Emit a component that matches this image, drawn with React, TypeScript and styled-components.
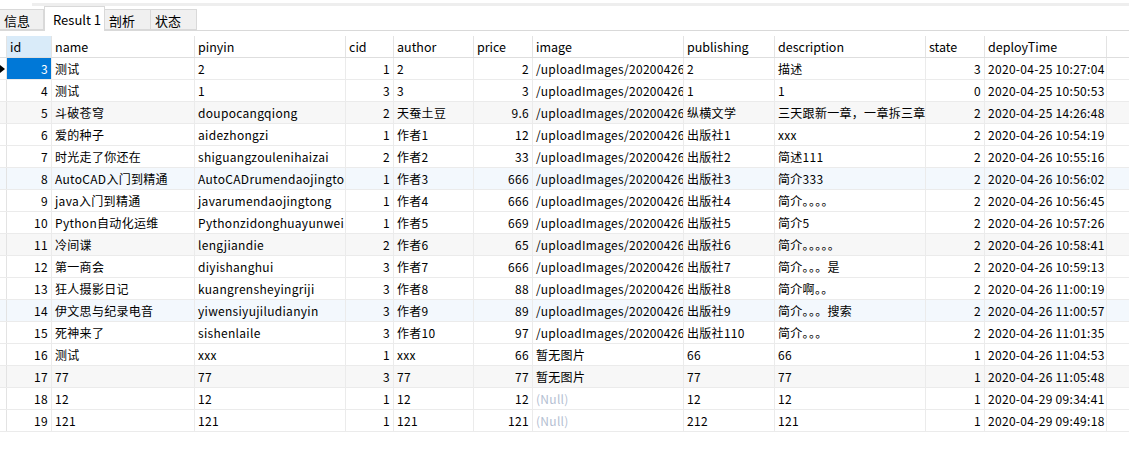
import React from "react";
import styled, { createGlobalStyle } from "styled-components";

const GlobalStyle = createGlobalStyle`
  html, body { margin: 0; padding: 0; background: #ffffff; }
  body {
    font-family: "Noto Sans CJK SC", "Noto Sans", sans-serif;
    font-size: 12px;
    color: #000000;
  }
`;

const Page = styled.div`
  width: 1129px;
  height: 452px;
  overflow: hidden;
  background: #ffffff;
`;

const TopStrip = styled.div`
  display: flex;
  height: 6px;
  padding-top: 3px;
  box-sizing: border-box;
`;

const StripGap = styled.div`
  width: 32px;
`;

const StripBand = styled.div`
  flex: 1;
  background: #eeeeee;
`;

const TabBar = styled.div`
  display: flex;
  align-items: flex-end;
  height: 25px;
  border-bottom: 1px solid #d9d9d9;
  box-sizing: border-box;
`;

const Tab = styled.div<{ $active?: boolean; $w: number }>`
  width: ${(p) => p.$w}px;
  height: ${(p) => (p.$active ? 25 : 21)}px;
  box-sizing: border-box;
  display: flex;
  align-items: center;
  padding-left: ${(p) => (p.$active ? 8 : 4)}px;
  padding-top: ${(p) => (p.$active ? 0 : 1)}px;
  margin-bottom: ${(p) => (p.$active ? -1 : 0)}px;
  background: ${(p) => (p.$active ? "#ffffff" : "#f0f0f0")};
  border: 1px solid #d9d9d9;
  border-left: ${(p) => (p.$active ? "1px solid #d9d9d9" : "none")};
  border-bottom: ${(p) => (p.$active ? "none" : "1px solid #d9d9d9")};
  font-size: 13px;
  color: #000;
  &:first-child { border-left: none; }
`;

const Spacer = styled.div`
  height: 5px;
`;

const Grid = styled.div`
  display: flex;
  flex-direction: column;
`;

const Row = styled.div<{ $tint?: string; $header?: boolean }>`
  display: flex;
  height: 21px;
  border-bottom: 1px solid ${(p) => (p.$header ? "#dedede" : "#ebebeb")};
  box-sizing: content-box;
  background: ${(p) => p.$tint || "#ffffff"};
`;

const Indicator = styled.div`
  width: 7px;
  flex: none;
  border-right: 1px solid #e3e3e3;
  box-sizing: border-box;
  display: flex;
  align-items: center;
`;

const Arrow = styled.div`
  width: 0;
  height: 0;
  border-top: 4px solid transparent;
  border-bottom: 4px solid transparent;
  border-left: 5px solid #000;
`;

const Cell = styled.div<{ $w: number; $right?: boolean; $sel?: boolean; $head?: boolean; $headSel?: boolean }>`
  width: ${(p) => p.$w}px;
  flex: none;
  box-sizing: border-box;
  border-right: 1px solid ${(p) => (p.$head ? "#e3e3e3" : "#ebebeb")};
  padding: 0 3px 0 3px;
  display: flex;
  align-items: center;
  justify-content: ${(p) => (p.$right ? "flex-end" : "flex-start")};
  white-space: nowrap;
  overflow: hidden;
  font-size: ${(p) => (p.$head ? 12.5 : 12)}px;
  letter-spacing: ${(p) => (p.$head ? 0 : 0.3)}px;
  background: ${(p) => (p.$sel ? "#0078d7" : p.$headSel ? "#d9ebf9" : "transparent")};
  color: ${(p) => (p.$sel ? "#ffffff" : "#000000")};
`;

const NullText = styled.span`
  color: #b4c0d2;
`;

type Col = { key: string; w: number; right?: boolean };

const cols: Col[] = [
  { key: "id", w: 45, right: true },
  { key: "name", w: 143 },
  { key: "pinyin", w: 151 },
  { key: "cid", w: 48, right: true },
  { key: "author", w: 80 },
  { key: "price", w: 59, right: true },
  { key: "image", w: 151 },
  { key: "publishing", w: 91 },
  { key: "description", w: 151 },
  { key: "state", w: 59, right: true },
  { key: "deployTime", w: 122 },
];

const IMG = "/uploadImages/20200426";

const data: (string | number | null)[][] = [
  [3, "测试", "2", 1, "2", 2, IMG, "2", "描述", 3, "2020-04-25 10:27:04"],
  [4, "测试", "1", 3, "3", 3, IMG, "1", "1", 0, "2020-04-25 10:50:53"],
  [5, "斗破苍穹", "doupocangqiong", 2, "天蚕土豆", "9.6", IMG, "纵横文学", "三天跟新一章，一章拆三章", 2, "2020-04-25 14:26:48"],
  [6, "爱的种子", "aidezhongzi", 1, "作者1", 12, IMG, "出版社1", "xxx", 2, "2020-04-26 10:54:19"],
  [7, "时光走了你还在", "shiguangzoulenihaizai", 2, "作者2", 33, IMG, "出版社2", "简述111", 2, "2020-04-26 10:55:16"],
  [8, "AutoCAD入门到精通", "AutoCADrumendaojingtong", 1, "作者3", 666, IMG, "出版社3", "简介333", 2, "2020-04-26 10:56:02"],
  [9, "java入门到精通", "javarumendaojingtong", 1, "作者4", 666, IMG, "出版社4", "简介。。。。", 2, "2020-04-26 10:56:45"],
  [10, "Python自动化运维", "Pythonzidonghuayunwei", 1, "作者5", 669, IMG, "出版社5", "简介5", 2, "2020-04-26 10:57:26"],
  [11, "冷间谍", "lengjiandie", 2, "作者6", 65, IMG, "出版社6", "简介。。。。。", 2, "2020-04-26 10:58:41"],
  [12, "第一商会", "diyishanghui", 3, "作者7", 666, IMG, "出版社7", "简介。。。是", 2, "2020-04-26 10:59:13"],
  [13, "狂人摄影日记", "kuangrensheyingriji", 3, "作者8", 88, IMG, "出版社8", "简介啊。。", 2, "2020-04-26 11:00:19"],
  [14, "伊文思与纪录电音", "yiwensiyujiludianyin", 3, "作者9", 89, IMG, "出版社9", "简介。。。搜索", 2, "2020-04-26 11:00:57"],
  [15, "死神来了", "sishenlaile", 3, "作者10", 97, IMG, "出版社110", "简介。。。", 2, "2020-04-26 11:01:35"],
  [16, "测试", "xxx", 1, "xxx", 66, "暂无图片", "66", "66", 1, "2020-04-26 11:04:53"],
  [17, "77", "77", 3, "77", 77, "暂无图片", "77", "77", 1, "2020-04-26 11:05:48"],
  [18, "12", "12", 1, "12", 12, null, "12", "12", 1, "2020-04-29 09:34:41"],
  [19, "121", "121", 1, "121", 121, null, "212", "121", 1, "2020-04-29 09:49:18"],
];

const tintFor = (id: number): string | undefined => {
  if (id === 5 || id === 11 || id === 17) return "#f7f7f7";
  if (id === 8 || id === 14) return "#f3f8fd";
  return undefined;
};

const tabs = [
  { label: "信息", w: 44 },
  { label: "Result 1", w: 61, active: true },
  { label: "剖析", w: 46 },
  { label: "状态", w: 46 },
];

export default function App() {
  return (
    <Page>
      <GlobalStyle />
      <TopStrip>
        <StripGap />
        <StripBand />
      </TopStrip>
      <TabBar>
        {tabs.map((t) => (
          <Tab key={t.label} $w={t.w} $active={t.active}>
            {t.label}
          </Tab>
        ))}
      </TabBar>
      <Spacer />
      <Grid>
        <Row $header>
          <Indicator />
          {cols.map((c, i) => (
            <Cell key={c.key} $w={c.w} $head $headSel={i === 0}>
              {c.key}
            </Cell>
          ))}
        </Row>
        {data.map((r, ri) => (
          <Row key={ri} $tint={tintFor(r[0] as number)}>
            <Indicator>{ri === 0 && <Arrow />}</Indicator>
            {cols.map((c, ci) => (
              <Cell key={c.key} $w={c.w} $right={c.right} $sel={ri === 0 && ci === 0}>
                {r[ci] === null ? <NullText>(Null)</NullText> : r[ci]}
              </Cell>
            ))}
          </Row>
        ))}
      </Grid>
    </Page>
  );
}
